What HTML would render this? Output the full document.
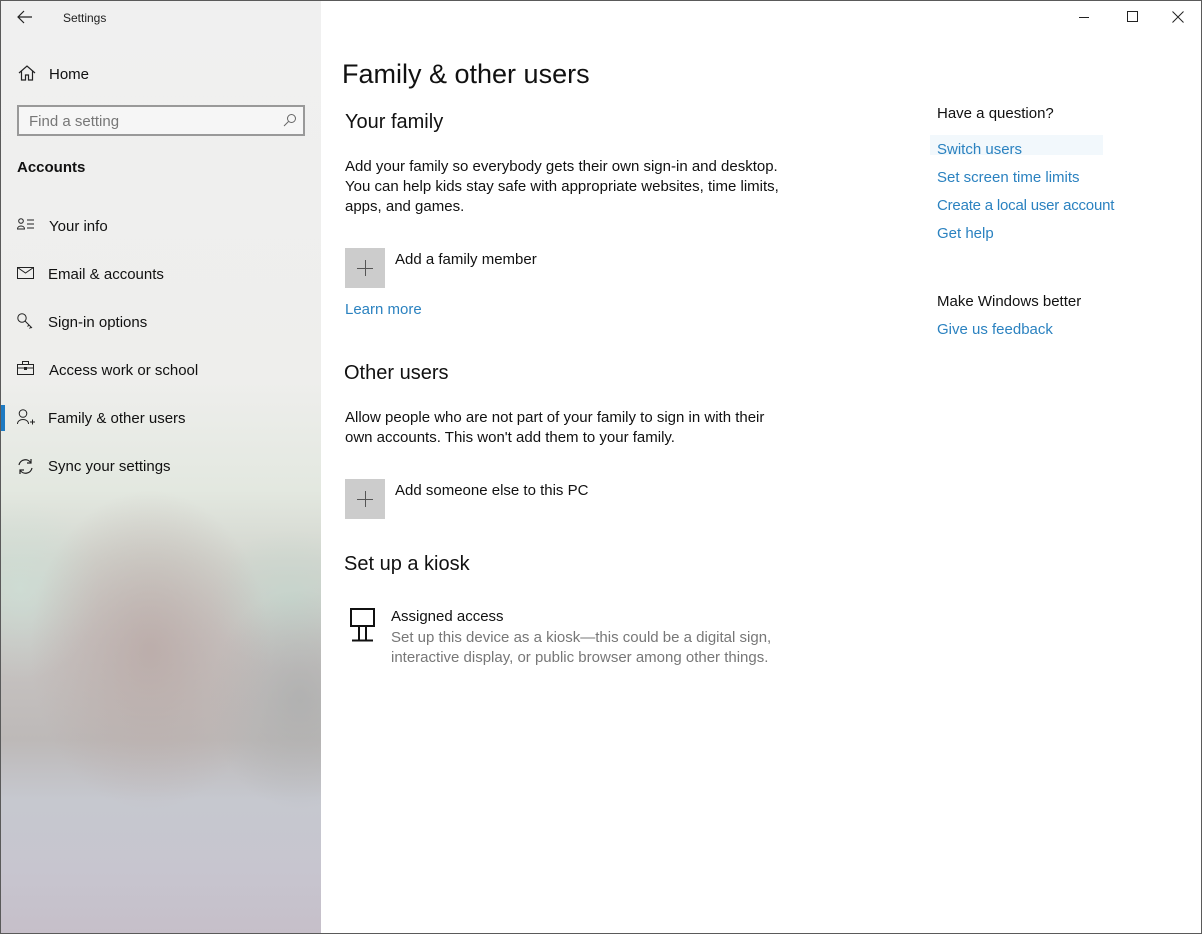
<!DOCTYPE html>
<html><head><meta charset="utf-8"><style>
*{margin:0;padding:0;box-sizing:border-box}
body{width:1202px;height:934px;overflow:hidden;font-family:"Liberation Sans",sans-serif;background:#fff;position:relative;color:#000}
.frame{position:absolute;left:0;top:0;width:1202px;height:934px;border:1px solid #5a5a5a;z-index:10;pointer-events:none}
.side{position:absolute;left:0;top:0;width:321px;height:934px;
background:
radial-gradient(ellipse 120px 160px at 150px 650px,rgba(185,168,165,.8),rgba(185,168,165,0)),
radial-gradient(ellipse 90px 110px at 300px 700px,rgba(170,172,172,.7),rgba(170,172,172,0)),
radial-gradient(ellipse 80px 70px at 290px 600px,rgba(195,215,205,.7),rgba(195,215,205,0)),
radial-gradient(ellipse 80px 90px at 20px 590px,rgba(205,225,215,.7),rgba(205,225,215,0)),
linear-gradient(180deg,#f0f0f0 0,#eeeeec 380px,#e3e8e0 490px,#d3d6cf 560px,#c8c4c2 640px,#bdb9b8 740px,#c6c8cf 800px,#c7c5cf 870px,#c6bfc9 934px);}
.t{position:absolute;white-space:nowrap}
.s{font-size:15px;color:#111}
.nav{font-size:15px;color:#111}
.ico{position:absolute}
.link{color:#2b82c0;font-size:15px}
.plus{position:absolute;width:40px;height:40px;background:#cccccc}
.plus:before{content:"";position:absolute;left:12px;top:19.5px;width:16px;height:1px;background:#555}
.plus:after{content:"";position:absolute;left:19.5px;top:12px;width:1px;height:16px;background:#555}
</style></head><body>
<div class="side"></div>
<div class="frame"></div>

<svg class="ico" style="left:17px;top:10px" width="16" height="14" viewBox="0 0 16 14"><path d="M1 7H15M7 1L1 7L7 13" stroke="#222" fill="none" stroke-width="1.2"/></svg>
<div class="t" style="left:63px;top:11px;font-size:12px;color:#222">Settings</div>

<svg class="ico" style="left:18px;top:65px" width="18" height="16" viewBox="0 0 18 16"><path d="M1 8L9 1L17 8M3.5 6V15H7.5V10H10.5V15H14.5V6" stroke="#222" fill="none" stroke-width="1.2"/></svg>
<div class="t nav" style="left:49px;top:66px">Home</div>

<div style="position:absolute;left:17px;top:105px;width:288px;height:31px;border:2px solid #999;background:#f6f6f6"></div>
<div class="t" style="left:29px;top:113px;font-size:15px;color:#777">Find a setting</div>
<svg class="ico" style="left:283px;top:113px" width="14" height="14" viewBox="0 0 14 14"><circle cx="8.5" cy="5.5" r="4" stroke="#666" fill="none"/><path d="M5.5 8.5L1 13" stroke="#666"/></svg>

<div class="t" style="left:17px;top:159px;font-size:15px;font-weight:bold;color:#111">Accounts</div>

<svg class="ico" style="left:17px;top:218px" width="18" height="13" viewBox="0 0 18 13"><circle cx="4" cy="3" r="2.3" stroke="#222" fill="none"/><path d="M0.5 11C0.5 7 7.5 7 7.5 11Z" stroke="#222" fill="none"/><path d="M10 2H17M10 6H17M10 10H17" stroke="#222"/></svg>
<div class="t nav" style="left:49px;top:218px">Your info</div>

<svg class="ico" style="left:17px;top:267px" width="17" height="12" viewBox="0 0 17 12"><rect x="0.5" y="0.5" width="16" height="11" stroke="#222" fill="none"/><path d="M0.5 0.5L8.5 6L16.5 0.5" stroke="#222" fill="none"/></svg>
<div class="t nav" style="left:48px;top:266px">Email &amp; accounts</div>

<svg class="ico" style="left:17px;top:313px" width="17" height="17" viewBox="0 0 17 17"><circle cx="5" cy="5" r="4.2" stroke="#222" fill="none"/><path d="M8 8L15 15M12 12L10.5 13.5M14 14L12.5 15.5" stroke="#222"/></svg>
<div class="t nav" style="left:48px;top:314px">Sign-in options</div>

<svg class="ico" style="left:17px;top:361px" width="17" height="14" viewBox="0 0 17 14"><rect x="0.5" y="3.5" width="16" height="10" stroke="#222" fill="none"/><path d="M5.5 3.5V0.5H11.5V3.5M0.5 7H16.5" stroke="#222" fill="none"/><rect x="7" y="6" width="3" height="3" fill="#222"/></svg>
<div class="t nav" style="left:49px;top:362px">Access work or school</div>

<div style="position:absolute;left:1px;top:405px;width:4px;height:26px;background:#1e7ac2"></div>
<svg class="ico" style="left:17px;top:409px" width="18" height="17" viewBox="0 0 18 17"><circle cx="6" cy="4.5" r="3.8" stroke="#222" fill="none"/><path d="M0.5 15C0.5 9 11.5 9 11.5 15" stroke="#222" fill="none"/><path d="M13 13H18M15.5 10.5V15.5" stroke="#222"/></svg>
<div class="t nav" style="left:48px;top:410px">Family &amp; other users</div>

<svg class="ico" style="left:17px;top:458px" width="17" height="17" viewBox="0 0 17 17"><path d="M2 7A6.5 6.5 0 0 1 14 5M15 10A6.5 6.5 0 0 1 3 12" stroke="#222" fill="none" stroke-width="1.2"/><path d="M14 1V5H10M3 16V12H7" stroke="#222" fill="none" stroke-width="1.2"/></svg>
<div class="t nav" style="left:48px;top:458px">Sync your settings</div>

<div style="position:absolute;left:1079px;top:17px;width:10px;height:1px;background:#222"></div>
<div style="position:absolute;left:1127px;top:11px;width:11px;height:11px;border:1px solid #222"></div>
<svg class="ico" style="left:1172px;top:11px" width="12" height="12" viewBox="0 0 12 12"><path d="M0.5 0.5L11.5 11.5M11.5 0.5L0.5 11.5" stroke="#222"/></svg>

<div class="t" style="left:342px;top:59px;font-size:27px;color:#111">Family &amp; other users</div>
<div class="t" style="left:345px;top:111px;font-size:20px;color:#111">Your family</div>
<div class="t s" style="left:345px;top:157px;line-height:20px">Add your family so everybody gets their own sign-in and desktop.<br>You can help kids stay safe with appropriate websites, time limits,<br>apps, and games.</div>
<div class="plus" style="left:345px;top:248px"></div>
<div class="t s" style="left:395px;top:251px">Add a family member</div>
<div class="t link" style="left:345px;top:301px">Learn more</div>

<div class="t" style="left:344px;top:362px;font-size:20px;color:#111">Other users</div>
<div class="t s" style="left:345px;top:408px;line-height:20px">Allow people who are not part of your family to sign in with their<br>own accounts. This won't add them to your family.</div>
<div class="plus" style="left:345px;top:479px"></div>
<div class="t s" style="left:395px;top:482px">Add someone else to this PC</div>

<div class="t" style="left:344px;top:553px;font-size:20px;color:#111">Set up a kiosk</div>
<svg class="ico" style="left:350px;top:608px" width="26" height="34" viewBox="0 0 26 34"><rect x="1" y="1" width="23" height="17" stroke="#111" stroke-width="2" fill="none"/><path d="M9 18V32M16 18V32M2 32.5H23" stroke="#111" stroke-width="2"/></svg>
<div class="t s" style="left:391px;top:608px">Assigned access</div>
<div class="t" style="left:391px;top:628px;font-size:15px;color:#777;line-height:20px">Set up this device as a kiosk—this could be a digital sign,<br>interactive display, or public browser among other things.</div>

<div class="t s" style="left:937px;top:105px">Have a question?</div>
<div style="position:absolute;left:930px;top:135px;width:173px;height:20px;background:#f2f8fc"></div>
<div class="t link" style="left:937px;top:141px">Switch users</div>
<div class="t link" style="left:937px;top:169px">Set screen time limits</div>
<div class="t link" style="left:937px;top:197px;letter-spacing:-0.2px">Create a local user account</div>
<div class="t link" style="left:937px;top:225px">Get help</div>
<div class="t s" style="left:937px;top:293px">Make Windows better</div>
<div class="t link" style="left:937px;top:321px">Give us feedback</div>
</body></html>
